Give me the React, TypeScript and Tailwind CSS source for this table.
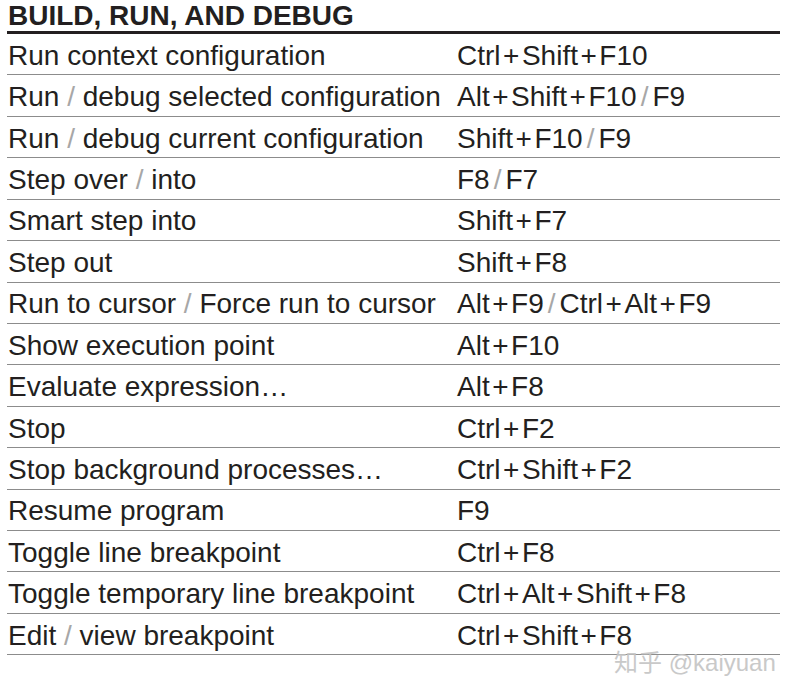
const rows: [string, string][] = [
  ["Run context configuration", "Ctrl + Shift + F10"],
  ["Run / debug selected configuration", "Alt + Shift + F10 / F9"],
  ["Run / debug current configuration", "Shift + F10 / F9"],
  ["Step over / into", "F8 / F7"],
  ["Smart step into", "Shift + F7"],
  ["Step out", "Shift + F8"],
  ["Run to cursor / Force run to cursor", "Alt + F9 / Ctrl + Alt + F9"],
  ["Show execution point", "Alt + F10"],
  ["Evaluate expression…", "Alt + F8"],
  ["Stop", "Ctrl + F2"],
  ["Stop background processes…", "Ctrl + Shift + F2"],
  ["Resume program", "F9"],
  ["Toggle line breakpoint", "Ctrl + F8"],
  ["Toggle temporary line breakpoint", "Ctrl + Alt + Shift + F8"],
  ["Edit / view breakpoint", "Ctrl + Shift + F8"],
];

// description: normal spaces, grey slash
const Desc = ({ text }: { text: string }) => {
  const parts = text.split(" / ");
  return (
    <span>
      {parts.map((p, i) => (
        <span key={i}>
          {i > 0 && <span className="text-[#a7a7a7]"> / </span>}
          {p}
        </span>
      ))}
    </span>
  );
};

// keys: tight spacing around + and /
const Keys = ({ text }: { text: string }) => {
  const alts = text.split(" / ");
  return (
    <span className="flex items-center">
      {alts.map((a, i) => (
        <span key={i} className="flex items-center">
          {i > 0 && <span className="mx-[4px] text-[#a7a7a7]">/</span>}
          {a.split(" + ").map((k, j) => (
            <span key={j} className="flex items-center">
              {j > 0 && <span className="mx-[2.5px]">+</span>}
              {k}
            </span>
          ))}
        </span>
      ))}
    </span>
  );
};

export default function App() {
  return (
    <div
      className="relative w-[798px] h-[697px] bg-white text-[#231f20] overflow-hidden"
      style={{ fontFamily: '"Liberation Sans", Arial, sans-serif' }}
    >
      <div className="ml-[7px] w-[773px]">
        <div className="h-[34px] border-b-[3px] border-[#231f20]">
          <h1 className="pl-[1px] text-[28px] font-bold leading-[32px]">
            BUILD, RUN, AND DEBUG
          </h1>
        </div>
        <div className="text-[28px] leading-none">
          {rows.map(([d, k], i) => (
            <div
              key={i}
              className="flex items-center pt-[3px] h-[41.43px] border-b-[1.5px] border-[#8c8c8c]"
            >
              <div className="w-[450px] pl-[1px] whitespace-nowrap">
                <Desc text={d} />
              </div>
              <div className="whitespace-nowrap">
                <Keys text={k} />
              </div>
            </div>
          ))}
        </div>
      </div>
      <div
        className="absolute left-[614px] top-[645px] text-[24px] text-[#c4c4c4] opacity-90 whitespace-nowrap"
        style={{ fontFamily: '"Liberation Sans", "Noto Sans CJK SC", sans-serif' }}
      >
        知乎 @kaiyuan
      </div>
    </div>
  );
}
